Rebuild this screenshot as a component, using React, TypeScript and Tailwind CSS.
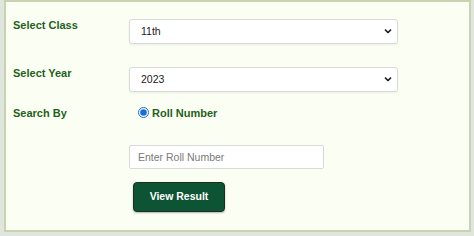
import { useState } from 'react'

const labelCls = 'w-[116px] shrink-0 text-[11px] leading-[12px] font-bold text-[#1f5f1c]'

function Chevron() {
  return (
    <svg
      width="8"
      height="5"
      viewBox="0 0 8 5"
      className="pointer-events-none absolute right-[6px] top-1/2 -translate-y-1/2"
    >
      <polyline points="1,1 4,4 7,1" fill="none" stroke="#1c1c1c" strokeWidth="1.6" />
    </svg>
  )
}

function Select({ value, options }: { value: string; options: string[] }) {
  const [v, setV] = useState(value)
  return (
    <div className="relative w-[269px] h-[25px]">
      <select
        value={v}
        onChange={(e) => setV(e.target.value)}
        className="appearance-none w-full h-full rounded-[3px] border border-[#dadada] bg-white pl-[11px] text-[10.5px] text-[#1a1a1a] shadow-[0_1px_2px_rgba(0,0,0,0.07)] outline-none"
      >
        {options.map((o) => (
          <option key={o}>{o}</option>
        ))}
      </select>
      <Chevron />
    </div>
  )
}

export default function App() {
  return (
    <div className="w-[474px] h-[236px] bg-[#dfe6dd] font-['Liberation_Sans',Arial,sans-serif] overflow-hidden">
      <div className="ml-[4px] w-[467px] h-[232px] border-2 border-[#c9d3b2] bg-[#fbfff3] pl-[7px] pt-[16px] flex flex-col">
        {/* Class */}
        <div className="flex items-start h-[25px]">
          <div className={`${labelCls} pt-[1px]`}>Select Class</div>
          <Select value="11th" options={['9th', '10th', '11th', '12th']} />
        </div>

        {/* Year */}
        <div className="flex items-start h-[25px] mt-[23px]">
          <div className={`${labelCls} pt-[1px]`}>Select Year</div>
          <Select value="2023" options={['2021', '2022', '2023', '2024']} />
        </div>

        {/* Search by */}
        <div className="flex items-center h-[13px] mt-[15px]">
          <div className={labelCls}>Search By</div>
          <label className="flex items-center ml-[9px] gap-[3px]">
            <input type="radio" checked readOnly className="m-0 w-[11px] h-[11px] accent-[#1a6fd6]" />
            <span className="text-[11px] leading-[12px] font-bold text-[#1f5f1c]">Roll Number</span>
          </label>
        </div>

        <input
          type="text"
          placeholder="Enter Roll Number"
          className="ml-[116px] mt-[26px] w-[195px] h-[24px] rounded-[2px] border border-[#d9d9d9] bg-white pl-[8px] text-[10.5px] text-[#222] placeholder:text-[#7a7a7a] outline-none"
        />

        <button className="ml-[120px] mt-[13px] w-[92px] h-[30px] rounded-[4px] border border-[#1d2d24] bg-[#0c5434] text-white text-[10.5px] font-bold shadow-[0_1px_2px_rgba(0,0,0,0.3)]">
          View Result
        </button>
      </div>
    </div>
  )
}
